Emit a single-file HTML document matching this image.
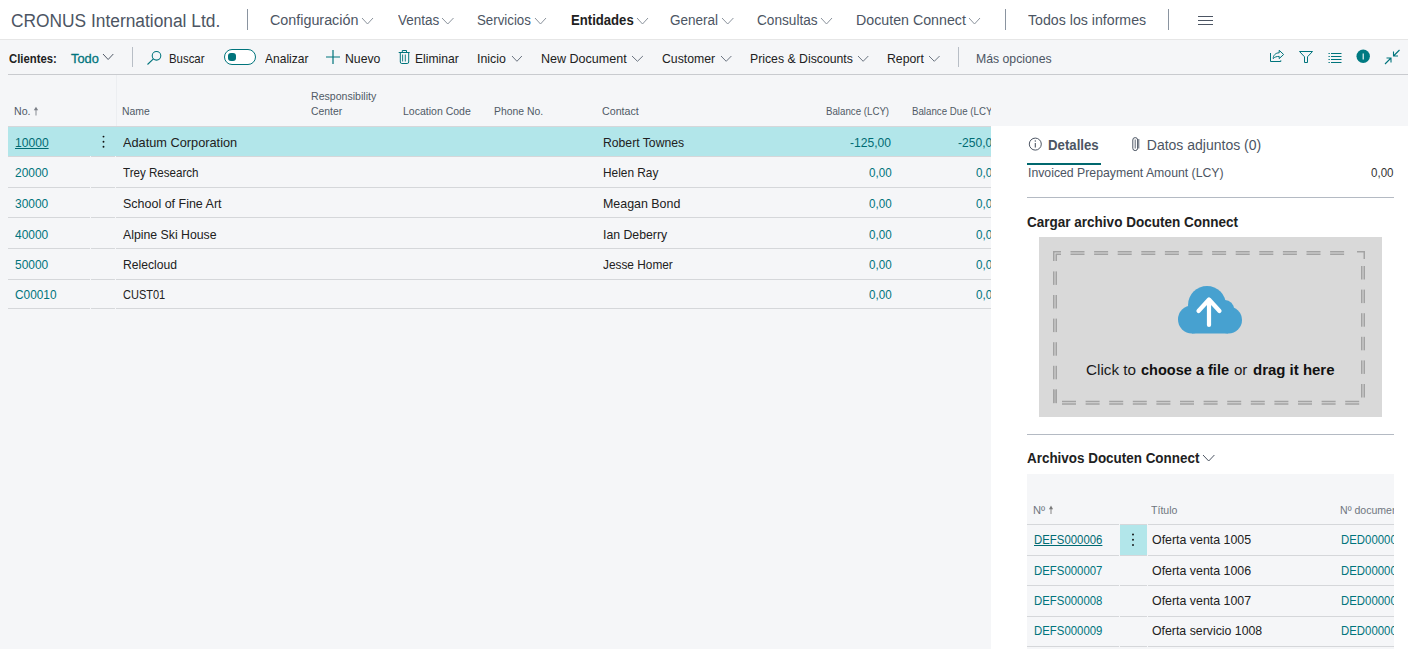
<!DOCTYPE html>
<html><head><meta charset="utf-8"><style>
html,body{margin:0;padding:0;}
body{width:1408px;height:649px;position:relative;overflow:hidden;background:#f5f6f8;font-family:"Liberation Sans",sans-serif;}
.t{position:absolute;white-space:nowrap;transform-origin:0 0;}
</style></head><body>
<div style="position:absolute;left:0;top:0;width:1408px;height:39px;background:#fff"></div>
<div style="position:absolute;left:0;top:39px;width:1408px;height:1px;background:#e6e6e6"></div>
<div style="position:absolute;left:8px;top:74px;width:1400px;height:1px;background:#c9cbcf"></div>
<div style="position:absolute;left:247px;top:9px;width:1px;height:21px;background:#8a94a0"></div><svg style="position:absolute;left:361px;top:17px" width="13" height="8"><path d="M1 1 L6.5 7 L12 1" fill="none" stroke="#8a929c" stroke-width="1.0"/></svg><svg style="position:absolute;left:441px;top:17px" width="13.5" height="8"><path d="M1 1 L6.75 7 L12.5 1" fill="none" stroke="#8a929c" stroke-width="1.0"/></svg><svg style="position:absolute;left:534px;top:17px" width="13" height="8"><path d="M1 1 L6.5 7 L12 1" fill="none" stroke="#8a929c" stroke-width="1.0"/></svg><svg style="position:absolute;left:636px;top:17px" width="13" height="8"><path d="M1 1 L6.5 7 L12 1" fill="none" stroke="#8a929c" stroke-width="1.0"/></svg><svg style="position:absolute;left:721px;top:17px" width="13.399999999999977" height="8"><path d="M1 1 L6.699999999999989 7 L12.399999999999977 1" fill="none" stroke="#8a929c" stroke-width="1.0"/></svg><svg style="position:absolute;left:820px;top:17px" width="13" height="8"><path d="M1 1 L6.5 7 L12 1" fill="none" stroke="#8a929c" stroke-width="1.0"/></svg><svg style="position:absolute;left:968px;top:17px" width="13" height="8"><path d="M1 1 L6.5 7 L12 1" fill="none" stroke="#8a929c" stroke-width="1.0"/></svg><div style="position:absolute;left:1005px;top:9px;width:1px;height:21px;background:#8a94a0"></div><div style="position:absolute;left:1168px;top:9px;width:1px;height:21px;background:#8a94a0"></div><div style="position:absolute;left:1198px;top:16px;width:15px;height:1px;background:#4c5563"></div><div style="position:absolute;left:1198px;top:20px;width:15px;height:1px;background:#4c5563"></div><div style="position:absolute;left:1198px;top:24px;width:15px;height:1px;background:#4c5563"></div><svg style="position:absolute;left:102.2px;top:52.5px" width="12.299999999999997" height="7.5"><path d="M1 1 L6.149999999999999 6.5 L11.299999999999997 1" fill="none" stroke="#505866" stroke-width="1.0"/></svg><div style="position:absolute;left:132px;top:47px;width:1px;height:20px;background:#b8bec6"></div><svg style="position:absolute;left:146px;top:49px" width="17" height="17"><circle cx="10.5" cy="6.8" r="4.3" fill="none" stroke="#00747c" stroke-width="1.05"/><path d="M7.4 9.9 L1.5 15.5" stroke="#00747c" stroke-width="1.1"/></svg><div style="position:absolute;left:224px;top:49px;width:29.5px;height:13.5px;border:1.25px solid #00747c;border-radius:8px;background:#fff"></div><div style="position:absolute;left:228px;top:53px;width:8px;height:8px;border-radius:3px;background:#00747c"></div><svg style="position:absolute;left:326px;top:50px" width="14" height="14"><path d="M7 0 V14 M0 7 H14" stroke="#00747c" stroke-width="1.2"/></svg><svg style="position:absolute;left:398px;top:49px" width="13" height="16"><path d="M0.7 3.5 H11.7 M4.3 3.5 V1.5 H8.5 V3.5 M2.3 3.5 V13 Q2.3 14.5 3.8 14.5 H9.2 Q10.7 14.5 10.7 13 V3.5" fill="none" stroke="#00747c" stroke-width="1"/><path d="M4.6 5.5 V12.5 M7.3 5.5 V12.5" stroke="#00747c" stroke-width="0.9"/></svg><svg style="position:absolute;left:510.7px;top:55px" width="11.900000000000034" height="7.299999999999997"><path d="M1 1 L5.950000000000017 6.299999999999997 L10.900000000000034 1" fill="none" stroke="#6b7480" stroke-width="1.0"/></svg><svg style="position:absolute;left:631px;top:55px" width="12.899999999999977" height="7.299999999999997"><path d="M1 1 L6.449999999999989 6.299999999999997 L11.899999999999977 1" fill="none" stroke="#6b7480" stroke-width="1.0"/></svg><svg style="position:absolute;left:719.6px;top:55px" width="12.399999999999977" height="7.299999999999997"><path d="M1 1 L6.199999999999989 6.299999999999997 L11.399999999999977 1" fill="none" stroke="#6b7480" stroke-width="1.0"/></svg><svg style="position:absolute;left:857.4px;top:55px" width="12.300000000000068" height="7.299999999999997"><path d="M1 1 L6.150000000000034 6.299999999999997 L11.300000000000068 1" fill="none" stroke="#6b7480" stroke-width="1.0"/></svg><svg style="position:absolute;left:928.4px;top:55px" width="12.600000000000023" height="7.299999999999997"><path d="M1 1 L6.300000000000011 6.299999999999997 L11.600000000000023 1" fill="none" stroke="#6b7480" stroke-width="1.0"/></svg><div style="position:absolute;left:958px;top:47px;width:1px;height:20px;background:#b8bec6"></div><svg style="position:absolute;left:1269px;top:49px" width="16" height="15"><path d="M1.5 4 V12.5 H11.8 V11.3" fill="none" stroke="#00747c" stroke-width="1"/><path d="M4.2 9.6 C4.2 6.3 6.6 3.8 10.2 3.8 V1.3 L14.6 5.5 L10.2 9.6 V7.4 C7.6 7.4 5.6 8 4.2 9.6 Z" fill="none" stroke="#00747c" stroke-width="1" stroke-linejoin="round"/></svg><svg style="position:absolute;left:1298px;top:49px" width="17" height="16"><path d="M1.5 2.5 H14.5 L9.5 7.8 V13.5 H6.5 V7.8 Z" fill="none" stroke="#00747c" stroke-width="1" stroke-linejoin="round"/></svg><svg style="position:absolute;left:1328px;top:52px" width="14" height="12"><path d="M0.5 1.5 H1.8 M3 1.5 H13.5 M0.5 4.5 H1.8 M3 4.5 H13.5 M0.5 7.5 H1.8 M3 7.5 H13.5 M0.5 10.5 H1.8 M3 10.5 H13.5" stroke="#00747c" stroke-width="1"/></svg><svg style="position:absolute;left:1356px;top:49px" width="15" height="15"><circle cx="7.2" cy="7.3" r="6.7" fill="#007a82"/><path d="M7.2 4.5 V10.5" stroke="#fff" stroke-width="1.1"/></svg><svg style="position:absolute;left:1384px;top:49px" width="17" height="16"><path d="M15.5 1 L9.5 7 M9.5 2.5 V7 H14 M1 15 L7 9 M2.5 9 H7 V13.5" fill="none" stroke="#00747c" stroke-width="1.1"/></svg><svg style="position:absolute;left:33px;top:105.5px" width="7" height="10"><path d="M3 9.5 V3" stroke="#9a9ea4" stroke-width="1.2"/><path d="M0.8 4.2 L3 0.8 L5.2 4.2 Z" fill="#7c8088"/></svg><div style="position:absolute;left:8px;top:126px;width:983px;height:30px;background:#b2e6ea"></div><div style="position:absolute;left:8px;top:126px;width:983px;height:1px;background:#d5d7da"></div><div style="position:absolute;left:116px;top:75px;width:1px;height:51px;background:#eceef1"></div><div style="position:absolute;left:8px;top:156px;width:82px;height:1px;background:#d5d7da"></div><div style="position:absolute;left:91px;top:156px;width:24px;height:1px;background:#d5d7da"></div><div style="position:absolute;left:116px;top:156px;width:875px;height:1px;background:#d5d7da"></div><div style="position:absolute;left:8px;top:187px;width:82px;height:1px;background:#d5d7da"></div><div style="position:absolute;left:91px;top:187px;width:24px;height:1px;background:#d5d7da"></div><div style="position:absolute;left:116px;top:187px;width:875px;height:1px;background:#d5d7da"></div><div style="position:absolute;left:8px;top:217px;width:82px;height:1px;background:#d5d7da"></div><div style="position:absolute;left:91px;top:217px;width:24px;height:1px;background:#d5d7da"></div><div style="position:absolute;left:116px;top:217px;width:875px;height:1px;background:#d5d7da"></div><div style="position:absolute;left:8px;top:248px;width:82px;height:1px;background:#d5d7da"></div><div style="position:absolute;left:91px;top:248px;width:24px;height:1px;background:#d5d7da"></div><div style="position:absolute;left:116px;top:248px;width:875px;height:1px;background:#d5d7da"></div><div style="position:absolute;left:8px;top:279px;width:82px;height:1px;background:#d5d7da"></div><div style="position:absolute;left:91px;top:279px;width:24px;height:1px;background:#d5d7da"></div><div style="position:absolute;left:116px;top:279px;width:875px;height:1px;background:#d5d7da"></div><div style="position:absolute;left:8px;top:308px;width:82px;height:1px;background:#d5d7da"></div><div style="position:absolute;left:91px;top:308px;width:24px;height:1px;background:#d5d7da"></div><div style="position:absolute;left:116px;top:308px;width:875px;height:1px;background:#d5d7da"></div><svg style="position:absolute;left:100px;top:132px" width="8" height="20"><circle cx="3.5" cy="4.6" r="0.95" fill="#111"/><circle cx="3.5" cy="9.7" r="0.95" fill="#111"/><circle cx="3.5" cy="14.8" r="0.95" fill="#111"/></svg><div style="position:absolute;left:991px;top:126px;width:417px;height:523px;background:#ffffff"></div><svg style="position:absolute;left:1028px;top:137px" width="15" height="15"><circle cx="7.3" cy="7.1" r="6" fill="none" stroke="#4c5563" stroke-width="1"/><path d="M7.3 6 V10.5" stroke="#4c5563" stroke-width="1.1"/><circle cx="7.3" cy="4" r="0.7" fill="#4c5563"/></svg><div style="position:absolute;left:1027px;top:163px;width:74px;height:2px;background:#00686e"></div><svg style="position:absolute;left:1131px;top:136px" width="10" height="16"><rect x="1.8" y="1.6" width="4.8" height="13" rx="2.4" fill="none" stroke="#4c5563" stroke-width="1"/><path d="M4.2 3.5 V12.5" stroke="#4c5563" stroke-width="0.9"/><path d="M7.8 3 V12.5" stroke="#4c5563" stroke-width="0.9"/></svg><div style="position:absolute;left:1027px;top:197px;width:367px;height:1px;background:#b4bac3"></div><div style="position:absolute;left:1039px;top:237px;width:343px;height:180px;background:#d9d9d9"></div><svg style="position:absolute;left:0;top:0" width="1408" height="649"><rect x="1070.5" y="251" width="14" height="1.5" fill="#a3a3a3"/><rect x="1070.5" y="253.5" width="14" height="1.5" fill="#a3a3a3"/><rect x="1094.1" y="251" width="14" height="1.5" fill="#a3a3a3"/><rect x="1094.1" y="253.5" width="14" height="1.5" fill="#a3a3a3"/><rect x="1117.6999999999998" y="251" width="14" height="1.5" fill="#a3a3a3"/><rect x="1117.6999999999998" y="253.5" width="14" height="1.5" fill="#a3a3a3"/><rect x="1141.2999999999997" y="251" width="14" height="1.5" fill="#a3a3a3"/><rect x="1141.2999999999997" y="253.5" width="14" height="1.5" fill="#a3a3a3"/><rect x="1164.8999999999996" y="251" width="14" height="1.5" fill="#a3a3a3"/><rect x="1164.8999999999996" y="253.5" width="14" height="1.5" fill="#a3a3a3"/><rect x="1188.4999999999995" y="251" width="14" height="1.5" fill="#a3a3a3"/><rect x="1188.4999999999995" y="253.5" width="14" height="1.5" fill="#a3a3a3"/><rect x="1212.0999999999995" y="251" width="14" height="1.5" fill="#a3a3a3"/><rect x="1212.0999999999995" y="253.5" width="14" height="1.5" fill="#a3a3a3"/><rect x="1235.6999999999994" y="251" width="14" height="1.5" fill="#a3a3a3"/><rect x="1235.6999999999994" y="253.5" width="14" height="1.5" fill="#a3a3a3"/><rect x="1259.2999999999993" y="251" width="14" height="1.5" fill="#a3a3a3"/><rect x="1259.2999999999993" y="253.5" width="14" height="1.5" fill="#a3a3a3"/><rect x="1282.8999999999992" y="251" width="14" height="1.5" fill="#a3a3a3"/><rect x="1282.8999999999992" y="253.5" width="14" height="1.5" fill="#a3a3a3"/><rect x="1306.499999999999" y="251" width="14" height="1.5" fill="#a3a3a3"/><rect x="1306.499999999999" y="253.5" width="14" height="1.5" fill="#a3a3a3"/><rect x="1330.099999999999" y="251" width="14" height="1.5" fill="#a3a3a3"/><rect x="1330.099999999999" y="253.5" width="14" height="1.5" fill="#a3a3a3"/><path d="M1053.75 261 V251.75 H1061" fill="none" stroke="#a3a3a3" stroke-width="1.5"/><path d="M1056.25 261 V254.25 H1061" fill="none" stroke="#a3a3a3" stroke-width="1.5"/><path d="M1357 251.75 H1364.25 V259" fill="none" stroke="#a3a3a3" stroke-width="1.5"/><rect x="1053" y="271.4" width="1.5" height="13.5" fill="#a3a3a3"/><rect x="1055.5" y="271.4" width="1.5" height="13.5" fill="#a3a3a3"/><rect x="1053" y="295.0" width="1.5" height="13.5" fill="#a3a3a3"/><rect x="1055.5" y="295.0" width="1.5" height="13.5" fill="#a3a3a3"/><rect x="1053" y="318.6" width="1.5" height="13.5" fill="#a3a3a3"/><rect x="1055.5" y="318.6" width="1.5" height="13.5" fill="#a3a3a3"/><rect x="1053" y="342.20000000000005" width="1.5" height="13.5" fill="#a3a3a3"/><rect x="1055.5" y="342.20000000000005" width="1.5" height="13.5" fill="#a3a3a3"/><rect x="1053" y="365.80000000000007" width="1.5" height="13.5" fill="#a3a3a3"/><rect x="1055.5" y="365.80000000000007" width="1.5" height="13.5" fill="#a3a3a3"/><rect x="1053" y="389.4000000000001" width="1.5" height="13.5" fill="#a3a3a3"/><rect x="1055.5" y="389.4000000000001" width="1.5" height="13.5" fill="#a3a3a3"/><rect x="1053" y="389.7" width="1.5" height="13.5" fill="#a3a3a3"/><rect x="1055.5" y="389.7" width="1.5" height="13.5" fill="#a3a3a3"/><rect x="1361" y="266" width="1.5" height="13.5" fill="#a3a3a3"/><rect x="1363.5" y="266" width="1.5" height="13.5" fill="#a3a3a3"/><rect x="1361" y="289.6" width="1.5" height="13.5" fill="#a3a3a3"/><rect x="1363.5" y="289.6" width="1.5" height="13.5" fill="#a3a3a3"/><rect x="1361" y="313.20000000000005" width="1.5" height="13.5" fill="#a3a3a3"/><rect x="1363.5" y="313.20000000000005" width="1.5" height="13.5" fill="#a3a3a3"/><rect x="1361" y="336.80000000000007" width="1.5" height="13.5" fill="#a3a3a3"/><rect x="1363.5" y="336.80000000000007" width="1.5" height="13.5" fill="#a3a3a3"/><rect x="1361" y="360.4000000000001" width="1.5" height="13.5" fill="#a3a3a3"/><rect x="1363.5" y="360.4000000000001" width="1.5" height="13.5" fill="#a3a3a3"/><rect x="1361" y="384.0000000000001" width="1.5" height="13.5" fill="#a3a3a3"/><rect x="1363.5" y="384.0000000000001" width="1.5" height="13.5" fill="#a3a3a3"/><rect x="1062" y="400.75" width="14" height="1.5" fill="#a3a3a3"/><rect x="1062" y="403.25" width="14" height="1.5" fill="#a3a3a3"/><rect x="1085.6" y="400.75" width="14" height="1.5" fill="#a3a3a3"/><rect x="1085.6" y="403.25" width="14" height="1.5" fill="#a3a3a3"/><rect x="1109.1999999999998" y="400.75" width="14" height="1.5" fill="#a3a3a3"/><rect x="1109.1999999999998" y="403.25" width="14" height="1.5" fill="#a3a3a3"/><rect x="1132.7999999999997" y="400.75" width="14" height="1.5" fill="#a3a3a3"/><rect x="1132.7999999999997" y="403.25" width="14" height="1.5" fill="#a3a3a3"/><rect x="1156.3999999999996" y="400.75" width="14" height="1.5" fill="#a3a3a3"/><rect x="1156.3999999999996" y="403.25" width="14" height="1.5" fill="#a3a3a3"/><rect x="1179.9999999999995" y="400.75" width="14" height="1.5" fill="#a3a3a3"/><rect x="1179.9999999999995" y="403.25" width="14" height="1.5" fill="#a3a3a3"/><rect x="1203.5999999999995" y="400.75" width="14" height="1.5" fill="#a3a3a3"/><rect x="1203.5999999999995" y="403.25" width="14" height="1.5" fill="#a3a3a3"/><rect x="1227.1999999999994" y="400.75" width="14" height="1.5" fill="#a3a3a3"/><rect x="1227.1999999999994" y="403.25" width="14" height="1.5" fill="#a3a3a3"/><rect x="1250.7999999999993" y="400.75" width="14" height="1.5" fill="#a3a3a3"/><rect x="1250.7999999999993" y="403.25" width="14" height="1.5" fill="#a3a3a3"/><rect x="1274.3999999999992" y="400.75" width="14" height="1.5" fill="#a3a3a3"/><rect x="1274.3999999999992" y="403.25" width="14" height="1.5" fill="#a3a3a3"/><rect x="1297.999999999999" y="400.75" width="14" height="1.5" fill="#a3a3a3"/><rect x="1297.999999999999" y="403.25" width="14" height="1.5" fill="#a3a3a3"/><rect x="1321.599999999999" y="400.75" width="14" height="1.5" fill="#a3a3a3"/><rect x="1321.599999999999" y="403.25" width="14" height="1.5" fill="#a3a3a3"/><rect x="1345.199999999999" y="400.75" width="14" height="1.5" fill="#a3a3a3"/><rect x="1345.199999999999" y="403.25" width="14" height="1.5" fill="#a3a3a3"/></svg><svg style="position:absolute;left:1170px;top:278px" width="80" height="64"><g fill="#47a1d0"><circle cx="37" cy="27" r="19"/><circle cx="22" cy="41.5" r="14"/><circle cx="58.5" cy="42" r="13.5"/><circle cx="55" cy="31" r="9"/><rect x="22" y="38" width="36" height="17.5"/></g><path d="M39 47 V22 M28.5 33 L39 21.5 L49.5 33" fill="none" stroke="#fff" stroke-width="4.2" stroke-linecap="round" stroke-linejoin="round"/></svg><div style="position:absolute;left:1027px;top:434px;width:367px;height:1px;background:#b4bac3"></div><svg style="position:absolute;left:1201.5px;top:454px" width="13.400000000000091" height="8"><path d="M1 1 L6.7000000000000455 7 L12.400000000000091 1" fill="none" stroke="#4c5563" stroke-width="1.0"/></svg><div style="position:absolute;left:1027px;top:474px;width:367px;height:175px;background:#f5f6f8"></div><div style="position:absolute;left:1120px;top:525px;width:27px;height:30px;background:#b2e6ea"></div><svg style="position:absolute;left:1130px;top:530px" width="8" height="20"><circle cx="3" cy="4.5" r="0.95" fill="#111"/><circle cx="3" cy="9.7" r="0.95" fill="#111"/><circle cx="3" cy="15" r="0.95" fill="#111"/></svg><div style="position:absolute;left:1027px;top:524px;width:92px;height:1px;background:#d5d7da"></div><div style="position:absolute;left:1120px;top:524px;width:27px;height:1px;background:#d5d7da"></div><div style="position:absolute;left:1148px;top:524px;width:246px;height:1px;background:#d5d7da"></div><div style="position:absolute;left:1027px;top:555px;width:92px;height:1px;background:#d5d7da"></div><div style="position:absolute;left:1120px;top:555px;width:27px;height:1px;background:#d5d7da"></div><div style="position:absolute;left:1148px;top:555px;width:246px;height:1px;background:#d5d7da"></div><div style="position:absolute;left:1027px;top:585px;width:92px;height:1px;background:#d5d7da"></div><div style="position:absolute;left:1120px;top:585px;width:27px;height:1px;background:#d5d7da"></div><div style="position:absolute;left:1148px;top:585px;width:246px;height:1px;background:#d5d7da"></div><div style="position:absolute;left:1027px;top:616px;width:92px;height:1px;background:#d5d7da"></div><div style="position:absolute;left:1120px;top:616px;width:27px;height:1px;background:#d5d7da"></div><div style="position:absolute;left:1148px;top:616px;width:246px;height:1px;background:#d5d7da"></div><div style="position:absolute;left:1027px;top:646px;width:92px;height:1px;background:#d5d7da"></div><div style="position:absolute;left:1120px;top:646px;width:27px;height:1px;background:#d5d7da"></div><div style="position:absolute;left:1148px;top:646px;width:246px;height:1px;background:#d5d7da"></div><svg style="position:absolute;left:1048px;top:505px" width="7" height="10"><path d="M3 9 V3" stroke="#a0a0a0" stroke-width="1.3"/><path d="M0.9 4.2 L3 0.6 L5.1 4.2 Z" fill="#7a7a7a"/></svg>
<div style="position:absolute;left:0;top:0;width:991px;height:649px;overflow:hidden"><div class="t" style="left:912.30px;top:105.90px;font-size:11px;line-height:11px;color:#505a66;transform:scaleX(0.8820);">Balance Due (LCY)</div><div class="t" style="left:15.10px;top:136.20px;font-size:13px;line-height:13px;color:#006b73;transform:scaleX(0.9295);text-decoration:underline;text-underline-offset:1px;">10000</div><div class="t" style="left:122.80px;top:136.20px;font-size:13px;line-height:13px;color:#212121;transform:scaleX(0.9815);">Adatum Corporation</div><div class="t" style="left:603.20px;top:136.20px;font-size:13px;line-height:13px;color:#212121;transform:scaleX(0.9381);">Robert Townes</div><div class="t" style="left:850.40px;top:136.20px;font-size:13px;line-height:13px;color:#006b73;transform:scaleX(0.9297);">-125,00</div><div class="t" style="left:958.00px;top:136.20px;font-size:13px;line-height:13px;color:#006b73;transform:scaleX(0.9297);">-250,00</div><div class="t" style="left:15.10px;top:166.20px;font-size:13px;line-height:13px;color:#00747c;transform:scaleX(0.9184);">20000</div><div class="t" style="left:122.80px;top:166.20px;font-size:13px;line-height:13px;color:#212121;transform:scaleX(0.8909);">Trey Research</div><div class="t" style="left:603.20px;top:166.20px;font-size:13px;line-height:13px;color:#212121;transform:scaleX(0.9127);">Helen Ray</div><div class="t" style="left:868.80px;top:166.20px;font-size:13px;line-height:13px;color:#00747c;transform:scaleX(0.8933);">0,00</div><div class="t" style="left:975.70px;top:166.20px;font-size:13px;line-height:13px;color:#00747c;transform:scaleX(0.8933);">0,00</div><div class="t" style="left:15.10px;top:197.20px;font-size:13px;line-height:13px;color:#00747c;transform:scaleX(0.9184);">30000</div><div class="t" style="left:122.80px;top:197.20px;font-size:13px;line-height:13px;color:#212121;transform:scaleX(0.9600);">School of Fine Art</div><div class="t" style="left:603.20px;top:197.20px;font-size:13px;line-height:13px;color:#212121;transform:scaleX(0.9549);">Meagan Bond</div><div class="t" style="left:868.80px;top:197.20px;font-size:13px;line-height:13px;color:#00747c;transform:scaleX(0.8933);">0,00</div><div class="t" style="left:975.70px;top:197.20px;font-size:13px;line-height:13px;color:#00747c;transform:scaleX(0.8933);">0,00</div><div class="t" style="left:15.10px;top:228.20px;font-size:13px;line-height:13px;color:#00747c;transform:scaleX(0.9184);">40000</div><div class="t" style="left:122.80px;top:228.20px;font-size:13px;line-height:13px;color:#212121;transform:scaleX(0.9455);">Alpine Ski House</div><div class="t" style="left:603.20px;top:228.20px;font-size:13px;line-height:13px;color:#212121;transform:scaleX(0.9440);">Ian Deberry</div><div class="t" style="left:868.80px;top:228.20px;font-size:13px;line-height:13px;color:#00747c;transform:scaleX(0.8933);">0,00</div><div class="t" style="left:975.70px;top:228.20px;font-size:13px;line-height:13px;color:#00747c;transform:scaleX(0.8933);">0,00</div><div class="t" style="left:15.10px;top:258.20px;font-size:13px;line-height:13px;color:#00747c;transform:scaleX(0.9184);">50000</div><div class="t" style="left:122.80px;top:258.20px;font-size:13px;line-height:13px;color:#212121;transform:scaleX(0.9325);">Relecloud</div><div class="t" style="left:603.20px;top:258.20px;font-size:13px;line-height:13px;color:#212121;transform:scaleX(0.9112);">Jesse Homer</div><div class="t" style="left:868.80px;top:258.20px;font-size:13px;line-height:13px;color:#00747c;transform:scaleX(0.8933);">0,00</div><div class="t" style="left:975.70px;top:258.20px;font-size:13px;line-height:13px;color:#00747c;transform:scaleX(0.8933);">0,00</div><div class="t" style="left:15.10px;top:288.20px;font-size:13px;line-height:13px;color:#00747c;transform:scaleX(0.9111);">C00010</div><div class="t" style="left:122.80px;top:288.20px;font-size:13px;line-height:13px;color:#212121;transform:scaleX(0.8465);">CUST01</div><div class="t" style="left:868.80px;top:288.20px;font-size:13px;line-height:13px;color:#00747c;transform:scaleX(0.8933);">0,00</div><div class="t" style="left:975.70px;top:288.20px;font-size:13px;line-height:13px;color:#00747c;transform:scaleX(0.8933);">0,00</div></div>
<div style="position:absolute;left:0;top:0;width:1394px;height:649px;overflow:hidden"><div class="t" style="left:1032.90px;top:504.90px;font-size:11px;line-height:11px;color:#707780;transform:scaleX(1.0126);">Nº</div><div class="t" style="left:1151.40px;top:504.90px;font-size:11px;line-height:11px;color:#707780;transform:scaleX(0.9600);">Título</div><div class="t" style="left:1340.30px;top:504.90px;font-size:11px;line-height:11px;color:#707780;transform:scaleX(0.9600);">Nº documento</div><div class="t" style="left:1033.50px;top:533.20px;font-size:13px;line-height:13px;color:#006b73;transform:scaleX(0.8764);text-decoration:underline;text-underline-offset:1px;">DEFS000006</div><div class="t" style="left:1152.20px;top:533.20px;font-size:13px;line-height:13px;color:#212121;transform:scaleX(0.9524);">Oferta venta 1005</div><div class="t" style="left:1341.40px;top:533.20px;font-size:13px;line-height:13px;color:#00747c;transform:scaleX(0.8764);">DED000006</div><div class="t" style="left:1033.50px;top:564.20px;font-size:13px;line-height:13px;color:#00747c;transform:scaleX(0.8764);">DEFS000007</div><div class="t" style="left:1152.20px;top:564.20px;font-size:13px;line-height:13px;color:#212121;transform:scaleX(0.9524);">Oferta venta 1006</div><div class="t" style="left:1341.40px;top:564.20px;font-size:13px;line-height:13px;color:#00747c;transform:scaleX(0.8764);">DED000006</div><div class="t" style="left:1033.50px;top:594.20px;font-size:13px;line-height:13px;color:#00747c;transform:scaleX(0.8764);">DEFS000008</div><div class="t" style="left:1152.20px;top:594.20px;font-size:13px;line-height:13px;color:#212121;transform:scaleX(0.9524);">Oferta venta 1007</div><div class="t" style="left:1341.40px;top:594.20px;font-size:13px;line-height:13px;color:#00747c;transform:scaleX(0.8764);">DED000006</div><div class="t" style="left:1033.50px;top:624.20px;font-size:13px;line-height:13px;color:#00747c;transform:scaleX(0.8764);">DEFS000009</div><div class="t" style="left:1152.20px;top:624.20px;font-size:13px;line-height:13px;color:#212121;transform:scaleX(0.9471);">Oferta servicio 1008</div><div class="t" style="left:1341.40px;top:624.20px;font-size:13px;line-height:13px;color:#00747c;transform:scaleX(0.8764);">DED000006</div></div>
<div class="t" style="left:10.80px;top:11.95px;font-size:18px;line-height:18px;color:#4c5563;transform:scaleX(0.9636);">CRONUS International Ltd.</div><div class="t" style="left:269.60px;top:13.35px;font-size:14px;line-height:14px;color:#4c5563;transform:scaleX(1.0231);">Configuración</div><div class="t" style="left:397.80px;top:13.35px;font-size:14px;line-height:14px;color:#4c5563;transform:scaleX(0.9626);">Ventas</div><div class="t" style="left:477.30px;top:13.35px;font-size:14px;line-height:14px;color:#4c5563;transform:scaleX(0.9489);">Servicios</div><div class="t" style="left:571.30px;top:13.35px;font-size:14px;line-height:14px;color:#212121;font-weight:bold;transform:scaleX(0.9372);">Entidades</div><div class="t" style="left:670.30px;top:13.35px;font-size:14px;line-height:14px;color:#4c5563;transform:scaleX(0.9659);">General</div><div class="t" style="left:756.90px;top:13.35px;font-size:14px;line-height:14px;color:#4c5563;transform:scaleX(0.9735);">Consultas</div><div class="t" style="left:856.30px;top:13.35px;font-size:14px;line-height:14px;color:#4c5563;transform:scaleX(1.0157);">Docuten Connect</div><div class="t" style="left:1028.10px;top:13.35px;font-size:14px;line-height:14px;color:#4c5563;transform:scaleX(1.0120);">Todos los informes</div><div class="t" style="left:8.60px;top:52.20px;font-size:13px;line-height:13px;color:#212121;font-weight:bold;transform:scaleX(0.8707);">Clientes:</div><div class="t" style="left:71.40px;top:52.20px;font-size:13px;line-height:13px;color:#00747c;transform:scaleX(0.9858);-webkit-text-stroke:0.3px #00747c;">Todo</div><div class="t" style="left:169.00px;top:52.20px;font-size:13px;line-height:13px;color:#212121;transform:scaleX(0.8776);">Buscar</div><div class="t" style="left:265.10px;top:52.20px;font-size:13px;line-height:13px;color:#212121;transform:scaleX(0.9244);">Analizar</div><div class="t" style="left:344.60px;top:52.20px;font-size:13px;line-height:13px;color:#212121;transform:scaleX(0.9415);">Nuevo</div><div class="t" style="left:415.40px;top:52.20px;font-size:13px;line-height:13px;color:#212121;transform:scaleX(0.9329);">Eliminar</div><div class="t" style="left:476.50px;top:52.20px;font-size:13px;line-height:13px;color:#212121;transform:scaleX(0.9489);">Inicio</div><div class="t" style="left:540.50px;top:52.20px;font-size:13px;line-height:13px;color:#212121;transform:scaleX(0.9645);">New Document</div><div class="t" style="left:661.60px;top:52.20px;font-size:13px;line-height:13px;color:#212121;transform:scaleX(0.9423);">Customer</div><div class="t" style="left:749.50px;top:52.20px;font-size:13px;line-height:13px;color:#212121;transform:scaleX(0.9432);">Prices &amp; Discounts</div><div class="t" style="left:887.20px;top:52.20px;font-size:13px;line-height:13px;color:#212121;transform:scaleX(0.9436);">Report</div><div class="t" style="left:975.50px;top:52.20px;font-size:13px;line-height:13px;color:#4c5563;transform:scaleX(0.9426);">Más opciones</div><div class="t" style="left:13.90px;top:105.90px;font-size:11px;line-height:11px;color:#505a66;transform:scaleX(0.9649);">No.</div><div class="t" style="left:122.30px;top:105.90px;font-size:11px;line-height:11px;color:#505a66;transform:scaleX(0.9472);">Name</div><div class="t" style="left:310.90px;top:105.90px;font-size:11px;line-height:11px;color:#505a66;transform:scaleX(0.9424);">Center</div><div class="t" style="left:402.70px;top:105.90px;font-size:11px;line-height:11px;color:#505a66;transform:scaleX(0.9556);">Location Code</div><div class="t" style="left:494.30px;top:105.90px;font-size:11px;line-height:11px;color:#505a66;transform:scaleX(0.9442);">Phone No.</div><div class="t" style="left:601.70px;top:105.90px;font-size:11px;line-height:11px;color:#505a66;transform:scaleX(0.9710);">Contact</div><div class="t" style="left:826.40px;top:105.90px;font-size:11px;line-height:11px;color:#505a66;transform:scaleX(0.8819);">Balance (LCY)</div><div class="t" style="left:310.90px;top:90.90px;font-size:11px;line-height:11px;color:#505a66;transform:scaleX(0.9609);">Responsibility</div><div class="t" style="left:1047.80px;top:138.35px;font-size:14px;line-height:14px;color:#4c5563;font-weight:bold;transform:scaleX(0.9441);">Detalles</div><div class="t" style="left:1146.80px;top:138.35px;font-size:14px;line-height:14px;color:#4c5563;">Datos adjuntos (0)</div><div class="t" style="left:1027.50px;top:166.20px;font-size:13px;line-height:13px;color:#4c5563;transform:scaleX(0.9433);">Invoiced Prepayment Amount (LCY)</div><div class="t" style="left:1370.80px;top:166.20px;font-size:13px;line-height:13px;color:#333333;transform:scaleX(0.8893);">0,00</div><div class="t" style="left:1027.40px;top:215.35px;font-size:14px;line-height:14px;color:#212121;font-weight:bold;transform:scaleX(0.9652);">Cargar archivo Docuten Connect</div><div class="t" style="left:1086.20px;top:362.07px;font-size:15.5px;line-height:15.5px;color:#1a1a1a;transform:scaleX(0.9843);">Click to</div><div class="t" style="left:1140.90px;top:362.07px;font-size:15.5px;line-height:15.5px;color:#111;font-weight:bold;transform:scaleX(0.9372);">choose a file</div><div class="t" style="left:1234.40px;top:362.07px;font-size:15.5px;line-height:15.5px;color:#1a1a1a;transform:scaleX(0.9710);">or</div><div class="t" style="left:1253.00px;top:362.07px;font-size:15.5px;line-height:15.5px;color:#111;font-weight:bold;transform:scaleX(0.9656);">drag it here</div><div class="t" style="left:1027.20px;top:451.35px;font-size:14px;line-height:14px;color:#212121;font-weight:bold;transform:scaleX(0.9594);">Archivos Docuten Connect</div>
</body></html>
